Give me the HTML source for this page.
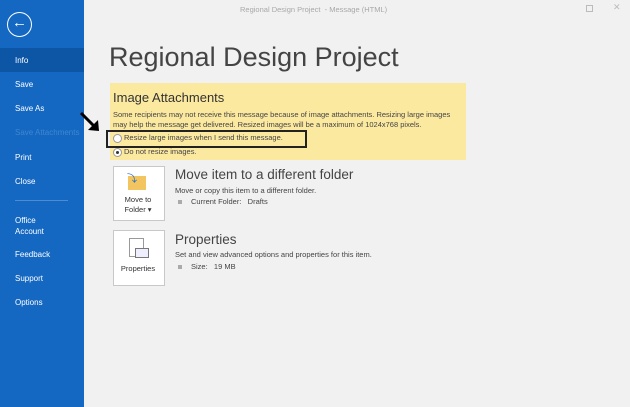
<html><head><style>
body{margin:0;width:630px;height:407px;background:#f1f1f1;font-family:"Liberation Sans",sans-serif;position:relative;overflow:hidden}
.a{position:absolute;white-space:nowrap}
#sb{position:absolute;left:0;top:0;width:84px;height:407px;background:#1468c2}
.n{position:absolute;left:15px;color:#fff;font-size:8px}
.box{position:absolute;background:#fff;border:1px solid #c8c8c8}
.g{color:#444;font-size:7.5px}
.bul{display:inline-block;width:4px;height:4px;background:#aaa;margin-right:9px;vertical-align:middle}
</style></head><body>
<div class="a" style="left:240px;top:5px;font-size:7.5px;color:#a8a8a8">Regional Design Project &nbsp;- Message (HTML)</div>
<div class="a" style="left:586px;top:5px;width:5px;height:5px;border:1px solid #bbb"></div>
<div class="a" style="left:613px;top:2px;font-size:9px;color:#bbb">✕</div>
<div id="sb">
<div class="a" style="left:7px;top:12px;width:23px;height:23px;border:1.5px solid #fff;border-radius:50%"></div>
<div class="a" style="left:12px;top:14px;color:#fff;font-size:15px">←</div>
<div class="a" style="left:0;top:48px;width:84px;height:24px;background:#0d56a6"></div>
<div class="n" style="top:56px">Info</div>
<div class="n" style="top:80px">Save</div>
<div class="n" style="top:104px">Save As</div>
<div class="n" style="top:128px;color:#3f86d0">Save Attachments</div>
<div class="n" style="top:153px">Print</div>
<div class="n" style="top:177px">Close</div>
<div class="a" style="left:15px;top:200px;width:53px;height:1px;background:#4b8cd2"></div>
<div class="n" style="top:215px;line-height:11px">Office<br>Account</div>
<div class="n" style="top:250px">Feedback</div>
<div class="n" style="top:274px">Support</div>
<div class="n" style="top:298px">Options</div>
</div>
<svg class="a" style="left:78px;top:110px" width="26" height="26" viewBox="0 0 26 26"><path d="M3 3 L17 17" stroke="#000" stroke-width="3"/><path d="M21 21 L20 10 L10 20 Z" fill="#000"/></svg>
<div class="a" style="left:109px;top:42px;font-size:27px;color:#444">Regional Design Project</div>
<div class="a" style="left:110px;top:83px;width:356px;height:77px;background:#fce9a0"></div>
<div class="a" style="left:113px;top:90px;font-size:13px;color:#333">Image Attachments</div>
<div class="a g" style="left:113px;top:110px;line-height:10px">Some recipients may not receive this message because of image attachments. Resizing large images<br>may help the message get delivered. Resized images will be a maximum of 1024x768 pixels.</div>
<div class="a" style="left:106px;top:130px;width:197px;height:14px;border:2px solid #222"></div>
<div class="a" style="left:113px;top:134px;width:7px;height:7px;border:1px solid #999;border-radius:50%;background:#fff"></div>
<div class="a g" style="left:124px;top:133px">Resize large images when I send this message.</div>
<div class="a" style="left:113px;top:148px;width:7px;height:7px;border:1px solid #999;border-radius:50%;background:#fff"></div>
<div class="a" style="left:115.5px;top:150.5px;width:3px;height:3px;border-radius:50%;background:#333"></div>
<div class="a g" style="left:124px;top:147px">Do not resize images.</div>
<div class="box" style="left:113px;top:166px;width:50px;height:53px"></div>
<div class="a" style="left:128px;top:176px;width:18px;height:14px;background:#f3c560"></div>
<div class="a" style="left:127px;top:170px;font-size:10px;color:#1e6fc8">⤵</div>
<div class="a" style="left:113px;top:195px;width:50px;text-align:center;font-size:7.5px;color:#333;line-height:10px">Move to<br>Folder ▾</div>
<div class="a" style="left:175px;top:167px;font-size:13.5px;color:#444">Move item to a different folder</div>
<div class="a g" style="left:175px;top:186px">Move or copy this item to a different folder.</div>
<div class="a g" style="left:178px;top:197px"><span class="bul"></span>Current Folder: &nbsp;&nbsp;Drafts</div>
<div class="box" style="left:113px;top:230px;width:50px;height:54px"></div>
<div class="a" style="left:129px;top:238px;width:13px;height:17px;border:1px solid #999;background:#fff"></div>
<div class="a" style="left:135px;top:248px;width:12px;height:8px;border:1px solid #777;background:#eef"></div>
<div class="a" style="left:113px;top:264px;width:50px;text-align:center;font-size:7.5px;color:#333">Properties</div>
<div class="a" style="left:175px;top:232px;font-size:13.5px;color:#444">Properties</div>
<div class="a g" style="left:175px;top:250px">Set and view advanced options and properties for this item.</div>
<div class="a g" style="left:178px;top:262px"><span class="bul"></span>Size: &nbsp;&nbsp;19 MB</div>
</body></html>
